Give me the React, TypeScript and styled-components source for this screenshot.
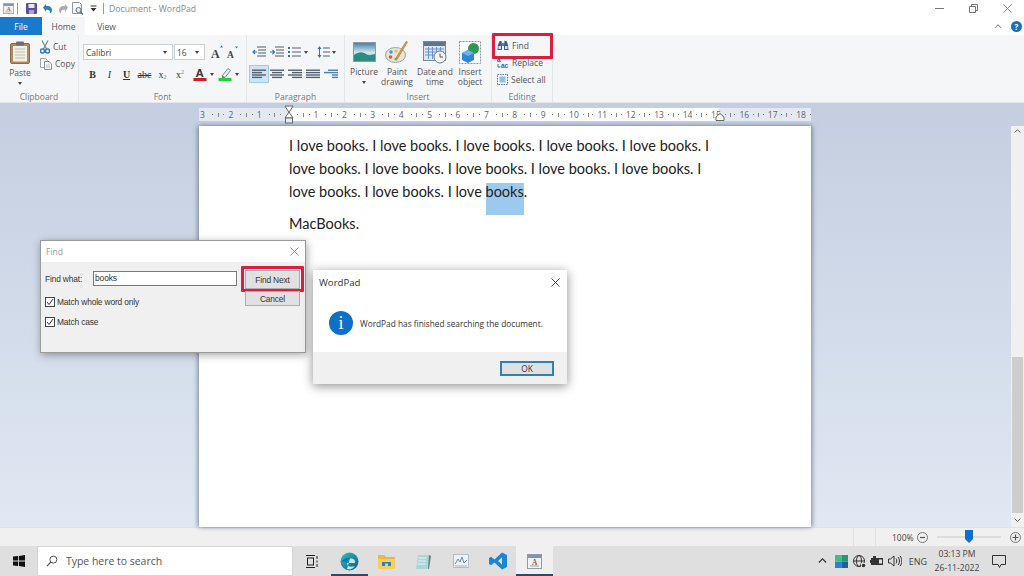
import React from 'react';
import styled, { createGlobalStyle } from 'styled-components';

const GlobalStyle = createGlobalStyle`
  html, body { margin: 0; padding: 0; overflow: hidden; background: #fff; }
  * { box-sizing: border-box; }
`;

const UI_FONT = `"Open Sans", "Noto Sans", sans-serif`;

const Screen = styled.div`
  position: relative;
  width: 1024px;
  height: 576px;
  display: flex;
  flex-direction: column;
  overflow: hidden;
  font-family: ${UI_FONT};
  font-size: 8.5px;
  color: #444;
`;

/* title bar */
const TitleBar = styled.div`
  height: 17px;
  display: flex;
  align-items: center;
  padding-left: 3px;
  background: #fff;
`;
const QuickSlot = styled.div<{ $w: number }>`
  width: ${p => p.$w}px;
  display: flex;
  justify-content: center;
  align-items: center;
  flex: none;
`;
const QuickSep = styled.div<{ $l: number; $r: number }>`
  width: 1px;
  height: 11px;
  background: #9a9a9a;
  margin: 0 ${p => p.$r}px 0 ${p => p.$l}px;
  flex: none;
`;
const DocTitle = styled.div`
  font-size: 8.7px;
  color: #8a8a8a;
`;
const WindowButtons = styled.div`
  margin-left: auto;
  display: flex;
  align-items: center;
`;
const WindowButton = styled.div`
  width: 34px;
  display: flex;
  justify-content: center;
  align-items: center;
`;

/* tabs */
const TabRow = styled.div`
  height: 18px;
  display: flex;
  align-items: stretch;
  background: #fff;
`;
const FileTab = styled.div`
  width: 42px;
  background: #1979ca;
  color: #fff;
  display: flex;
  align-items: center;
  justify-content: center;
  font-size: 8.5px;
`;
const Tab = styled.div<{ $active?: boolean }>`
  width: 43px;
  display: flex;
  align-items: center;
  justify-content: center;
  font-size: 8.5px;
  color: #555;
  background: ${p => (p.$active ? '#f5f6f7' : '#fff')};
`;
const TabEnd = styled.div`
  margin-left: auto;
  display: flex;
  align-items: center;
  gap: 9px;
  padding-right: 2px;
`;
const HelpDot = styled.div`
  width: 11px;
  height: 11px;
  border-radius: 50%;
  background: #1b6fc2;
  color: #fff;
  font-size: 8px;
  font-weight: 700;
  display: flex;
  align-items: center;
  justify-content: center;
`;

/* ribbon */
const Ribbon = styled.div`
  height: 68px;
  display: flex;
  background: #f5f6f7;
  border-bottom: 1px solid #e4e6ea;
`;
const Group = styled.div<{ $w: number }>`
  position: relative;
  width: ${p => p.$w}px;
  flex: none;
  display: flex;
  flex-direction: column;
  border-right: 1px solid #e3e5e8;
`;
const GroupBody = styled.div`
  flex: 1;
  min-height: 0;
`;
const GroupLabel = styled.div`
  height: 12px;
  line-height: 14px;
  text-align: center;
  font-size: 8.5px;
  color: #777;
`;
const ClipBody = styled(GroupBody)`
  display: flex;
`;
const PasteColumn = styled.div`
  width: 40px;
  padding-top: 6px;
  display: flex;
  flex-direction: column;
  align-items: center;
  color: #555;
`;
const PasteLabel = styled.div`
  margin-top: 4px;
  line-height: 10px;
`;
const Caret = styled.div`
  width: 0;
  height: 0;
  border-left: 2.5px solid transparent;
  border-right: 2.5px solid transparent;
  border-top: 3px solid #444;
  flex: none;
`;
const PasteCaret = styled(Caret)`
  margin-top: 4px;
`;
const SmallColumn = styled.div`
  padding-top: 3px;
  display: flex;
  flex-direction: column;
`;
const SmallRow = styled.div`
  height: 17px;
  display: flex;
  align-items: center;
  gap: 3px;
  white-space: nowrap;
  color: #555;
`;
const RowStack = styled(GroupBody)`
  padding-top: 9px;
  display: flex;
  flex-direction: column;
  gap: 6px;
`;
const ToolRow = styled.div`
  height: 16px;
  display: flex;
  align-items: center;
`;
const Combo = styled.div<{ $w: number }>`
  width: ${p => p.$w}px;
  height: 16px;
  margin-right: 1px;
  flex: none;
  background: #fff;
  border: 1px solid #c9ced6;
  display: flex;
  align-items: center;
  justify-content: space-between;
  padding: 0 5px 0 2px;
  font-size: 8.5px;
  color: #444;
`;
const Slot = styled.div<{ $w: number; $active?: boolean }>`
  width: ${p => p.$w}px;
  height: 16px;
  flex: none;
  display: flex;
  align-items: center;
  justify-content: center;
  background: ${p => (p.$active ? '#cfe2f6' : 'transparent')};
  outline: ${p => (p.$active ? '1px solid #a6c8ea' : 'none')};
  font-family: "Liberation Serif", serif;
  font-size: 10px;
  color: #333;
`;
const Script = styled.span<{ $up?: boolean }>`
  font-size: 6px;
  line-height: 6px;
  margin-top: ${p => (p.$up ? '-5px' : '5px')};
  color: #777;
`;
const Pad = styled.div<{ $w: number }>`
  width: ${p => p.$w}px;
  flex: none;
`;
const InsertBody = styled(GroupBody)`
  display: flex;
  padding: 6px 0 0 3px;
`;
const InsertItem = styled.div<{ $w: number }>`
  width: ${p => p.$w}px;
  display: flex;
  flex-direction: column;
  align-items: center;
  flex: none;
  text-align: center;
  line-height: 10px;
  color: #555;
  white-space: nowrap;
`;
const InsertIcon = styled.div`
  height: 22px;
  margin-bottom: 4px;
  display: flex;
  align-items: center;
`;
const InsertCaret = styled(Caret)`
  margin-top: 4px;
`;
const EditBody = styled(GroupBody)`
  padding: 2px 0 0 5px;
  display: flex;
  flex-direction: column;
`;
const RedBoxFind = styled.div`
  position: absolute;
  left: 0;
  top: -2px;
  width: 61px;
  height: 26px;
  border: 3px solid #dc1f3e;
  border-radius: 1px;
`;

/* workspace */
const Workspace = styled.div`
  position: relative;
  flex: 1;
  min-height: 0;
  background: linear-gradient(#c4cee0, #e0e8f3);
  display: flex;
  flex-direction: column;
  align-items: flex-start;
  padding: 5px 0 0 199px;
`;
const Ruler = styled.div`
  position: relative;
  width: 612px;
  height: 13px;
  display: flex;
  padding-left: 1px;
  overflow: hidden;
  background: linear-gradient(to right, #e4e9f1 90px, #fff 90px, #fff 520px, #e4e9f1 520px);
  font-size: 8.5px;
  color: #5d6270;
  flex: none;
`;
const RulerCell = styled.div`
  width: 28.4px;
  flex: none;
  display: flex;
  align-items: center;
  justify-content: space-between;
  padding-right: 4px;
`;
const RulerNumber = styled.span`
  min-width: 7px;
  line-height: 13px;
`;
const RulerDot = styled.span`
  width: 1px;
  height: 1px;
  background: #777;
`;
const RulerTick = styled.span`
  width: 1px;
  height: 4px;
  background: #888;
`;
const IndentMark = styled.div`
  position: absolute;
  left: 284px;
  top: 105px;
  line-height: 0;
`;
const RightMark = styled.div`
  position: absolute;
  left: 715px;
  top: 113px;
  line-height: 0;
`;
const Page = styled.div`
  margin-top: 5px;
  width: 612px;
  flex: 1;
  background: #fff;
  padding: 8px 93px 0 90px;
  box-shadow: -2px 0 4px rgba(70, 85, 115, 0.45), 2px 0 4px rgba(70, 85, 115, 0.45);
  font-family: Lato, "Liberation Sans", sans-serif;
  font-size: 14.5px;
  line-height: 23px;
  color: #222;
`;
const Paragraph = styled.div`
  margin-bottom: 9px;
`;
const Selected = styled.span`
  position: relative;
  &::before {
    content: '';
    position: absolute;
    left: 0;
    right: 0;
    top: 0;
    height: 32px;
    background: #9cc9ee;
    z-index: 0;
  }
  & > span {
    position: relative;
  }
`;
const ScrollBar = styled.div`
  position: absolute;
  right: 0;
  top: 23px;
  bottom: 0;
  width: 13px;
  background: #f0f0f0;
  display: flex;
  flex-direction: column;
  align-items: center;
  justify-content: space-between;
  padding-top: 3px;
`;
const ScrollThumb = styled.div`
  width: 11px;
  height: 156px;
  margin-top: auto;
  background: #cdcdcd;
`;
const ScrollDown = styled.div`
  height: 14px;
  display: flex;
  align-items: center;
`;

/* status bar */
const StatusBar = styled.div`
  height: 19px;
  flex: none;
  background: #f0f0f0;
  border-top: 1px solid #e2e2e2;
  display: flex;
  align-items: center;
  justify-content: flex-end;
  font-size: 8.5px;
  color: #444;
`;
const StatusSep = styled.div<{ $gap: number }>`
  width: 1px;
  height: 18px;
  background: #e2e2e2;
  margin-right: ${p => p.$gap}px;
`;
const ZoomText = styled.span`
  width: 25px;
`;
const ZoomButton = styled.div`
  width: 11px;
  height: 11px;
  border-radius: 50%;
  border: 1px solid #777;
  display: flex;
  align-items: center;
  justify-content: center;
  flex: none;
  line-height: 0;
`;
const ZoomTrack = styled.div`
  position: relative;
  width: 64px;
  height: 2px;
  margin: 0 9px;
  background: #dcdcdc;
`;
const ZoomThumb = styled.div`
  position: absolute;
  left: 28px;
  top: -6px;
  width: 8px;
  height: 13px;
  background: #0f6fd0;
  clip-path: polygon(0 0, 100% 0, 100% 70%, 50% 100%, 0 70%);
`;

/* task bar */
const TaskBar = styled.div`
  height: 30px;
  flex: none;
  background: #dfdfdf;
  display: flex;
  align-items: stretch;
`;
const StartButton = styled.div`
  width: 37px;
  display: flex;
  align-items: center;
  justify-content: center;
`;
const SearchBox = styled.div`
  width: 256px;
  background: #fff;
  border: 1px solid #d4d4d4;
  display: flex;
  align-items: center;
  padding-left: 8px;
  gap: 8px;
  font-size: 10.45px;
  color: #555;
`;
const TaskViewSlot = styled.div`
  width: 38px;
  display: flex;
  align-items: center;
  justify-content: center;
`;
const TaskSlot = styled.div<{ $open?: boolean; $active?: boolean }>`
  width: 37px;
  display: flex;
  align-items: center;
  justify-content: center;
  background: ${p => (p.$active ? '#f0f0f0' : 'transparent')};
  border-bottom: 2px solid ${p => (p.$open ? '#2c4a6e' : 'transparent')};
  border-top: 2px solid transparent;
`;
const Tray = styled.div`
  margin-left: auto;
  display: flex;
  align-items: center;
  padding-right: 10px;
  color: #444;
`;
const TraySlot = styled.div<{ $w: number }>`
  width: ${p => p.$w}px;
  display: flex;
  align-items: center;
  justify-content: center;
  flex: none;
`;
const Lang = styled.div`
  width: 24px;
  font-size: 9px;
  text-align: center;
  margin-left: 3px;
`;
const Clock = styled.div`
  width: 54px;
  text-align: center;
  font-size: 8.6px;
  line-height: 14px;
`;

/* dialogs */
const FindDialog = styled.div`
  position: absolute;
  left: 40px;
  top: 240px;
  width: 266px;
  height: 113px;
  background: #f0f0f0;
  border: 1px solid #9a9a9a;
  box-shadow: 1px 2px 8px rgba(0, 0, 0, 0.35);
  display: flex;
  flex-direction: column;
  font-family: "Liberation Sans", sans-serif;
  font-size: 8.4px;
  letter-spacing: -0.15px;
  color: #333;
`;
const FindTitle = styled.div`
  height: 21px;
  flex: none;
  background: #fff;
  display: flex;
  align-items: center;
  justify-content: space-between;
  padding: 0 6px 0 5px;
  font-family: ${UI_FONT};
  font-size: 8.5px;
  letter-spacing: 0;
  color: #9a9a9a;
`;
const FindContent = styled.div`
  display: grid;
  grid-template-columns: 1fr 55px;
  column-gap: 8px;
  padding: 8px 5px 0 4px;
`;
const FindLeft = styled.div`
  display: flex;
  flex-direction: column;
  gap: 5px;
  padding-top: 1px;
`;
const FindLine = styled.div`
  display: flex;
  align-items: center;
  height: 15px;
  margin-bottom: 3px;
`;
const FindLabel = styled.span`
  width: 48px;
`;
const FindInput = styled.div`
  width: 144px;
  height: 15px;
  background: #fff;
  border: 1px solid #7a7a7a;
  padding-left: 1px;
  line-height: 13px;
  font-size: 8.5px;
`;
const CheckLine = styled.div`
  display: flex;
  align-items: center;
  gap: 2px;
  height: 15px;
`;
const CheckBox = styled.div`
  width: 10px;
  height: 10px;
  background: #fff;
  border: 1px solid #444;
  display: flex;
  align-items: center;
  justify-content: center;
`;
const FindButtons = styled.div`
  display: flex;
  flex-direction: column;
  gap: 2px;
`;
const DialogButton = styled.div<{ $primary?: boolean }>`
  position: relative;
  height: ${p => (p.$primary ? '19px' : '15px')};
  background: #e1e1e1;
  border: 1px solid #adadad;
  display: flex;
  align-items: center;
  justify-content: center;
`;
const RedBoxNext = styled.div`
  position: absolute;
  left: -5px;
  top: -5px;
  width: 63px;
  height: 26px;
  border: 3px solid #dc1f3e;
  border-radius: 1px;
`;
const MessageDialog = styled.div`
  position: absolute;
  left: 313px;
  top: 270px;
  width: 254px;
  height: 114px;
  background: #fff;
  box-shadow: 0 2px 10px rgba(0, 0, 0, 0.45);
  display: flex;
  flex-direction: column;
  font-size: 8.3px;
  color: #333;
`;
const MessageTop = styled.div`
  height: 24px;
  flex: none;
  display: flex;
  align-items: center;
  justify-content: space-between;
  padding: 0 7px 0 6px;
  font-size: 9.6px;
  color: #333;
`;
const MessageBody = styled.div`
  flex: 1;
  display: flex;
  align-items: center;
  gap: 7px;
  padding: 0 0 0 16px;
`;
const InfoDot = styled.div`
  width: 24px;
  height: 24px;
  border-radius: 50%;
  background: #0c6fc8;
  color: #fff;
  display: flex;
  align-items: center;
  justify-content: center;
  font-family: "Liberation Serif", serif;
  font-size: 18px;
  flex: none;
`;
const MessageFoot = styled.div`
  height: 32px;
  flex: none;
  background: #f0f0f0;
  display: flex;
  align-items: center;
  justify-content: flex-end;
  padding-right: 13px;
`;
const OkButton = styled.div`
  width: 54px;
  height: 15px;
  background: #e1e1e1;
  border: 2px solid #2f7ebd;
  display: flex;
  align-items: center;
  justify-content: center;
`;

/* drawings */
const Close = ({ c = '#666', s = 9 }: { c?: string; s?: number }) => (
  <svg width={s} height={s} viewBox="0 0 10 10">
    <path d="M0.5 0.5L9.5 9.5M9.5 0.5L0.5 9.5" stroke={c} strokeWidth="1" fill="none" />
  </svg>
);

const Lines = ({ rows, c = '#55606e' }: { rows: number[][]; c?: string }) => (
  <svg width="14" height="11" viewBox="0 0 14 11">
    {rows.map((r, i) => (
      <rect key={i} x={r[0]} y={i * 2.4 + 0.5} width={r[1]} height="1.4" fill={c} />
    ))}
  </svg>
);

const Indent = ({ flip }: { flip?: boolean }) => (
  <svg width="14" height="12" viewBox="0 0 14 12">
    <path d="M5 1h9M6 4h8M6 7h8M5 10h9" stroke="#4f5b68" strokeWidth="1.2" />
    <path d={flip ? 'M0 6h4M2.5 4l2 2-2 2' : 'M5 6H1M3 4L1 6l2 2'} stroke="#3573b5" strokeWidth="1.1" fill="none" />
  </svg>
);

const BulletList = () => (
  <svg width="14" height="12" viewBox="0 0 14 12">
    <path d="M5 2h9M5 6h9M5 10h9" stroke="#56616e" strokeWidth="1.2" />
    <path d="M1 1h2v2H1zM1 5h2v2H1zM1 9h2v2H1z" fill="#2d75ba" />
  </svg>
);

const LineSpacing = () => (
  <svg width="13" height="14" viewBox="0 0 13 14">
    <path d="M2.5 1L0.5 4h4zM2.5 13L0.5 10h4z" fill="#2d75ba" />
    <rect x="2" y="4" width="1" height="6" fill="#2d75ba" />
    <path d="M6 3h7M6 7h7M6 11h7" stroke="#56616e" strokeWidth="1.2" />
  </svg>
);

const Clipboard = () => (
  <svg width="20" height="23" viewBox="0 0 20 23">
    <rect x="0.5" y="2.5" width="19" height="20" rx="1.5" fill="#b08a63" stroke="#8a6a48" />
    <rect x="3" y="5" width="14" height="15.5" fill="#f4f0df" />
    <path d="M5 8h10M5 11h10M5 14h10M5 17h10" stroke="#b8bcc0" />
    <rect x="6" y="0.5" width="8" height="4" rx="1" fill="#6d6d6d" />
  </svg>
);

const Scissors = () => (
  <svg width="10" height="14" viewBox="0 0 10 14">
    <path d="M2 0.5L6.5 9M8 0.5L3.5 9" stroke="#7f8a96" strokeWidth="1.3" fill="none" />
    <circle cx="2.5" cy="11" r="2" fill="none" stroke="#2c7cc4" strokeWidth="1.5" />
    <circle cx="7.5" cy="11" r="2" fill="none" stroke="#2c7cc4" strokeWidth="1.5" />
  </svg>
);

const CopyIcon = () => (
  <svg width="12" height="12" viewBox="0 0 12 12">
    <path d="M0.5 0.5h5l2 2v7h-7z" fill="#fff" stroke="#9aa3ad" />
    <path d="M4.5 3.5h4.5l2.5 2.5v5.5h-7z" fill="#fdfdfd" stroke="#8a94a0" />
    <path d="M6 7h4M6 9h4" stroke="#b5bcc4" />
  </svg>
);

const AGrow = ({ small }: { small?: boolean }) => (
  <svg width="15" height="14" viewBox="0 0 15 14">
    <text x="1" y="12.5" fontFamily="Liberation Serif, serif" fontWeight="700" fontSize={small ? 9.5 : 12} fill="#444">A</text>
    <path d={small ? 'M9 1.5h3L10.5 3.5z' : 'M11.5 0.5L13 2.5h-3z'} fill="#2d75ba" />
  </svg>
);

const FontColor = () => (
  <svg width="14" height="14" viewBox="0 0 14 14">
    <text x="2.5" y="10" fontFamily="Liberation Sans, sans-serif" fontWeight="700" fontSize="11.5" fill="#333">A</text>
    <rect x="0.5" y="11" width="13" height="3" fill="#d11b2b" />
  </svg>
);

const HighlightPen = () => (
  <svg width="14" height="14" viewBox="0 0 14 14">
    <path d="M4 9L10 1.5l2.5 2L7 10.5z" fill="#e7edf4" stroke="#7d8a98" />
    <path d="M4 9l3 1.5-3 .5z" fill="#666" />
    <rect x="0.5" y="11" width="13" height="3" fill="#22d13a" />
  </svg>
);

const PictureIcon = () => (
  <svg width="23" height="20" viewBox="0 0 23 20">
    <defs>
      <linearGradient id="sky" x1="0" y1="0" x2="0" y2="1">
        <stop offset="0" stopColor="#3d7fae" />
        <stop offset="0.55" stopColor="#d7e9ee" />
        <stop offset="1" stopColor="#2f7f83" />
      </linearGradient>
    </defs>
    <rect x="0.5" y="0.5" width="22" height="19" fill="url(#sky)" stroke="#8b98a5" />
    <path d="M1 13c5-4 9-3 12-1s6 1 9 0v7H1z" fill="#2f8a80" />
  </svg>
);

const PaletteIcon = () => (
  <svg width="25" height="23" viewBox="0 0 25 23">
    <ellipse cx="10.5" cy="14" rx="10" ry="7.5" fill="#e9e4d6" stroke="#97a4b4" />
    <circle cx="6" cy="11" r="1.8" fill="#3f9bd8" />
    <circle cx="5.5" cy="16" r="1.8" fill="#e2574c" />
    <circle cx="11" cy="18" r="1.6" fill="#6fbf4c" />
    <circle cx="11" cy="10" r="1.6" fill="#f0c23c" />
    <path d="M22.5 1L13 17l-2 2 .5-3L21 .5z" fill="#d8a04a" stroke="#a8752f" strokeWidth="0.6" />
  </svg>
);

const CalendarIcon = () => (
  <svg width="24" height="23" viewBox="0 0 24 23">
    <rect x="0.5" y="0.5" width="22" height="19" fill="#dbe6f2" stroke="#7d8794" />
    <rect x="1" y="1" width="21" height="4" fill="#5c7693" />
    <path d="M2 8h19M2 11h19M2 14h19M5.5 6v12M9.5 6v12M13.5 6v12M17.5 6v12" stroke="#5d8fc9" strokeWidth="0.9" />
    <circle cx="17" cy="16" r="6" fill="#f4f4f0" stroke="#767d86" />
    <path d="M17 12.5V16h3" stroke="#555" fill="none" />
  </svg>
);

const ObjectIcon = () => (
  <svg width="22" height="23" viewBox="0 0 22 23">
    <rect x="0.5" y="0.5" width="21" height="22" fill="#fff" stroke="#8d959d" strokeDasharray="2 1" />
    <circle cx="14.5" cy="7.5" r="5.5" fill="#2e9a4e" />
    <path d="M3 12l6-3 6 3v7l-6 3-6-3z" fill="#2f85d8" />
    <path d="M3 12l6 3 6-3-6-3z" fill="#6fb1ea" />
  </svg>
);

const Binoculars = () => (
  <svg width="12" height="11" viewBox="0 0 12 11">
    <path d="M1 5l1.5-4h2L5 5v5H0.5zM11 5L9.5 1h-2L7 5v5h4.5z" fill="#3b5f8a" />
    <rect x="5" y="3" width="2" height="3" fill="#6a7f98" />
    <rect x="1.5" y="6" width="2.5" height="3" fill="#cfe0f2" />
    <rect x="8" y="6" width="2.5" height="3" fill="#cfe0f2" />
  </svg>
);

const ReplaceIcon = () => (
  <svg width="12" height="13" viewBox="0 0 12 13">
    <text x="0" y="5.5" fontFamily="Liberation Sans, sans-serif" fontSize="6.5" fontWeight="700" fill="#444">a</text>
    <text x="4" y="12" fontFamily="Liberation Sans, sans-serif" fontSize="6.5" fontWeight="700" fill="#2d6aa5">ac</text>
    <path d="M1 8v3h2.5" stroke="#2d75ba" fill="none" />
  </svg>
);

const SelectAllIcon = () => (
  <svg width="11" height="11" viewBox="0 0 11 11">
    <rect x="0.5" y="0.5" width="10" height="10" fill="#fff" stroke="#3d7bb8" strokeDasharray="1.5 1" />
    <rect x="2.5" y="2.5" width="6" height="6" fill="#8fc0ea" />
  </svg>
);

const WindowsLogo = () => (
  <svg width="12" height="12" viewBox="0 0 12 12">
    <path d="M0 1.6L5.2 1v4.6H0zM6 .9L12 0v5.6H6zM0 6.4h5.2V11L0 10.4zM6 6.4h6V12l-6-.9z" fill="#111" />
  </svg>
);

const SearchGlass = () => (
  <svg width="12" height="12" viewBox="0 0 13 13">
    <circle cx="8" cy="5" r="3.8" fill="none" stroke="#444" strokeWidth="1" />
    <path d="M5.2 7.8L1 12" stroke="#444" strokeWidth="1.1" />
  </svg>
);

const TaskView = () => (
  <svg width="12" height="13" viewBox="0 0 12 13">
    <path d="M0 .5h9M0 12.5h9" stroke="#222" />
    <rect x="1.5" y="3" width="6" height="7" fill="none" stroke="#222" />
    <path d="M11 1v3M11 5.5v2M11 9v3" stroke="#222" />
  </svg>
);

const EdgeIcon = () => (
  <svg width="19" height="19" viewBox="0 0 19 19">
    <defs>
      <linearGradient id="edge" x1="0" y1="0" x2="1" y2="1">
        <stop offset="0" stopColor="#2fc5a4" />
        <stop offset="1" stopColor="#0b56a8" />
      </linearGradient>
    </defs>
    <circle cx="9.5" cy="9.5" r="9" fill="url(#edge)" />
    <path d="M10 6.5c4 0 5.5 2 5 4.5h-8c-.2 3 3.5 5 8 3-2 3-5.5 4-8 3" fill="#d8f3e8" opacity="0.9" />
    <path d="M7 11c0-3 1.5-4.5 3-4.5C6 5 2 8 1.5 11c1-2 3-2.5 5.5 0z" fill="#0e6fbd" />
  </svg>
);

const FolderIcon = () => (
  <svg width="17" height="15" viewBox="0 0 17 15">
    <path d="M0 1h6l2 2h9v3H0z" fill="#e9b93f" />
    <rect y="5" width="17" height="10" fill="#f6cf62" />
    <rect x="4" y="8" width="9" height="4" fill="#2c7fb8" />
    <rect x="7" y="9.5" width="3" height="5.5" fill="#f6cf62" />
  </svg>
);

const NotesIcon = () => (
  <svg width="17" height="17" viewBox="0 0 17 17">
    <path d="M3 2h11v14H1z" fill="#a9d6d8" />
    <path d="M14 2l2 1-2 13-1-.5z" fill="#667d83" />
    <path d="M3.5 5h8M3 8h8M2.5 11h8" stroke="#e7f5f5" />
  </svg>
);

const MonitorIcon = () => (
  <svg width="16" height="14" viewBox="0 0 16 14">
    <rect x="0.5" y="0.5" width="15" height="13" fill="#eef1f5" stroke="#b5bcc5" />
    <path d="M2 10l3-5 2 3 2-5 2 6 3-3" stroke="#6d88ad" fill="none" />
    <path d="M2 12h12" stroke="#a8b2be" />
  </svg>
);

const VsCodeIcon = () => (
  <svg width="18" height="18" viewBox="0 0 18 18">
    <path d="M13 0.5L18 3v12l-5 2.5L5.5 10.5 2 13.2 0 12V6l2-1.2 3.5 2.7zM13 5.2L9 9l4 3.8z" fill="#1a85d6" />
  </svg>
);

const WordPadIcon = ({ s = 15 }: { s?: number }) => (
  <svg width={s} height={s} viewBox="0 0 15 15">
    <rect x="0.5" y="0.5" width="14" height="14" fill="#eef2f7" stroke="#8d9bab" />
    <rect x="1" y="1" width="13" height="3" fill="#7c95b3" />
    <text x="5" y="10.5" fontFamily="Liberation Serif, serif" fontSize="7.5" fontWeight="700" fill="#c8502a">A</text>
    <path d="M3 12h9" stroke="#8fa6c0" />
  </svg>
);

const SaveIcon = () => (
  <svg width="11" height="11" viewBox="0 0 11 11">
    <rect width="11" height="11" rx="1" fill="#5a4f9c" />
    <rect x="2.5" y="1" width="6" height="4" fill="#e8e8f2" />
    <rect x="3" y="7" width="5" height="4" fill="#aaa6cc" />
  </svg>
);

const TurnArrow = ({ c, flip }: { c: string; flip?: boolean }) => (
  <svg width="10" height="11" viewBox="0 0 10 11">
    <g transform={flip ? 'matrix(-1 0 0 1 10 0)' : undefined}>
      <path d="M3 3.2c3.5-1 6 1 6 4 0 1.5-1 3-2.5 3.5 1-1.5.8-4.5-3.5-4v2.3L0 4.5 3 1z" fill={c} />
    </g>
  </svg>
);

const PreviewIcon = () => (
  <svg width="12" height="13" viewBox="0 0 12 13">
    <path d="M0.5 0.5h7l2 2v9h-9z" fill="#fff" stroke="#8c97a3" />
    <circle cx="6.5" cy="8" r="2.5" fill="#e8eef5" stroke="#66707c" />
    <path d="M8.3 9.8L11 12.5" stroke="#66707c" strokeWidth="1.3" />
  </svg>
);

const QuickDrop = () => (
  <svg width="7" height="7" viewBox="0 0 7 7">
    <path d="M0.5 1h6" stroke="#333" />
    <path d="M0.5 3h6L3.5 6.5z" fill="#333" />
  </svg>
);

const Chevron = ({ up, c = '#555', s = 9 }: { up?: boolean; c?: string; s?: number }) => (
  <svg width={s} height={s * 0.6} viewBox="0 0 10 6">
    <path d={up ? 'M1 5l4-4 4 4' : 'M1 1l4 4 4-4'} stroke={c} strokeWidth="1.3" fill="none" />
  </svg>
);

const ColorTiles = () => (
  <svg width="13" height="13" viewBox="0 0 13 13">
    <rect width="6.5" height="6.5" x="0" y="6.5" fill="#2b7fd6" />
    <rect width="6.5" height="6.5" x="6.5" y="6.5" fill="#1d5f9f" />
    <rect width="6.5" height="6.5" x="0" y="0" fill="#3fbf84" />
    <rect width="6.5" height="6.5" x="6.5" y="0" fill="#1f9a70" />
  </svg>
);

const Globe = () => (
  <svg width="13" height="13" viewBox="0 0 13 13">
    <circle cx="6" cy="6" r="5.5" fill="none" stroke="#333" />
    <ellipse cx="6" cy="6" rx="2.5" ry="5.5" fill="none" stroke="#333" />
    <path d="M0.5 6h11" stroke="#333" />
    <rect x="8" y="8" width="5" height="5" fill="#dfdfdf" />
    <circle cx="10.5" cy="10.5" r="1.8" fill="#333" />
  </svg>
);

const Battery = () => (
  <svg width="14" height="10" viewBox="0 0 14 10">
    <rect x="1" y="2" width="12" height="7" fill="#333" />
    <rect x="0" y="4" width="1" height="3" fill="#333" />
    <path d="M3 0h3v2H3z" fill="#333" />
    <rect x="9" y="3.5" width="3" height="4" fill="#dfdfdf" />
  </svg>
);

const Speaker = () => (
  <svg width="14" height="12" viewBox="0 0 14 12">
    <path d="M0.5 4h2L6 1v10L2.5 8h-2z" fill="none" stroke="#333" />
    <path d="M8 3.5c1 1.5 1 3.5 0 5M10 2c2 2.5 2 5.5 0 8M12 .8c2.4 3 2.4 7.4 0 10.4" fill="none" stroke="#333" />
  </svg>
);

const NotifyIcon = () => (
  <svg width="14" height="13" viewBox="0 0 14 13">
    <path d="M0.5 0.5h13v9H9l-1.5 3-1.5-3H0.5z" fill="none" stroke="#333" />
  </svg>
);

const Hourglass = () => (
  <svg width="10" height="20" viewBox="0 0 10 20">
    <path d="M1 1h8L5 7.5zM1 13l4-6 4 6z" fill="#fff" stroke="#666" />
    <rect x="1.5" y="13" width="7" height="5" fill="#e8ebf0" stroke="#666" />
  </svg>
);

const RightIndent = () => (
  <svg width="10" height="8" viewBox="0 0 10 8">
    <path d="M1 7.5V4l4-3.5L9 4v3.5z" fill="#fff" stroke="#666" />
  </svg>
);

const Check = () => (
  <svg width="8" height="8" viewBox="0 0 8 8">
    <path d="M1 4l2 2.5L7 1" stroke="#333" fill="none" />
  </svg>
);

const Cross = ({ minus }: { minus?: boolean }) => (
  <svg width="7" height="7" viewBox="0 0 7 7">
    <path d={minus ? 'M1 3.5h5' : 'M0.5 3.5h6M3.5 0.5v6'} stroke="#555" strokeWidth="1.2" />
  </svg>
);

const RULER_VALUES = [3, 2, 1, 0, 1, 2, 3, 4, 5, 6, 7, 8, 9, 10, 11, 12, 13, 14, 15, 16, 17, 18];

const SENTENCE = 'I love books. ';

const App = () => (
  <Screen>
    <GlobalStyle />
    <TitleBar>
      <QuickSlot $w={11}><WordPadIcon s={11} /></QuickSlot>
      <QuickSep $l={3} $r={8} />
      <QuickSlot $w={11}><SaveIcon /></QuickSlot>
      <QuickSlot $w={21}><TurnArrow c="#2a7cc4" /></QuickSlot>
      <QuickSlot $w={10}><TurnArrow c="#a9adb3" flip /></QuickSlot>
      <QuickSlot $w={20}><PreviewIcon /></QuickSlot>
      <QuickSlot $w={10}><QuickDrop /></QuickSlot>
      <QuickSep $l={5} $r={5} />
      <DocTitle>Document - WordPad</DocTitle>
      <WindowButtons>
        <WindowButton>
          <svg width="9" height="1"><rect width="9" height="1" fill="#777" /></svg>
        </WindowButton>
        <WindowButton>
          <svg width="9" height="9" viewBox="0 0 9 9">
            <path d="M2.5 2V.5h6v6H7M.5 2.5h6v6h-6z" fill="none" stroke="#777" />
          </svg>
        </WindowButton>
        <WindowButton><Close c="#777" /></WindowButton>
      </WindowButtons>
    </TitleBar>

    <TabRow>
      <FileTab>File</FileTab>
      <Tab $active>Home</Tab>
      <Tab>View</Tab>
      <TabEnd>
        <Chevron up c="#999" s={8} />
        <HelpDot>?</HelpDot>
      </TabEnd>
    </TabRow>

    <Ribbon>
      <Group $w={79}>
        <ClipBody>
          <PasteColumn>
            <Clipboard />
            <PasteLabel>Paste</PasteLabel>
            <PasteCaret />
          </PasteColumn>
          <SmallColumn>
            <SmallRow><Scissors /> Cut</SmallRow>
            <SmallRow><CopyIcon /> Copy</SmallRow>
          </SmallColumn>
        </ClipBody>
        <GroupLabel>Clipboard</GroupLabel>
      </Group>

      <Group $w={168}>
        <RowStack>
          <ToolRow>
            <Pad $w={4} />
            <Combo $w={90}>Calibri <Caret /></Combo>
            <Combo $w={31}>16 <Caret /></Combo>
            <Pad $w={3} />
            <Slot $w={16}><AGrow /></Slot>
            <Slot $w={16}><AGrow small /></Slot>
          </ToolRow>
          <ToolRow>
            <Pad $w={5} />
            <Slot $w={17}><b>B</b></Slot>
            <Slot $w={17}><i>I</i></Slot>
            <Slot $w={17}><u><b>U</b></u></Slot>
            <Slot $w={19}><s>abc</s></Slot>
            <Slot $w={17}>x<Script>2</Script></Slot>
            <Slot $w={18}>x<Script $up>2</Script></Slot>
            <Pad $w={2} />
            <Slot $w={18}><FontColor /></Slot>
            <Slot $w={6}><Caret /></Slot>
            <Pad $w={1} />
            <Slot $w={18}><HighlightPen /></Slot>
            <Slot $w={6}><Caret /></Slot>
          </ToolRow>
        </RowStack>
        <GroupLabel>Font</GroupLabel>
      </Group>

      <Group $w={98}>
        <RowStack>
          <ToolRow>
            <Pad $w={3} />
            <Slot $w={18}><Indent /></Slot>
            <Slot $w={18}><Indent flip /></Slot>
            <Slot $w={16}><BulletList /></Slot>
            <Slot $w={8}><Caret /></Slot>
            <Pad $w={5} />
            <Slot $w={16}><LineSpacing /></Slot>
            <Slot $w={6}><Caret /></Slot>
          </ToolRow>
          <ToolRow>
            <Pad $w={3} />
            <Slot $w={18} $active><Lines rows={[[0, 14], [0, 10], [0, 14], [0, 10]]} /></Slot>
            <Slot $w={18}><Lines rows={[[0, 14], [2, 10], [0, 14], [2, 10]]} /></Slot>
            <Slot $w={18}><Lines rows={[[0, 14], [4, 10], [0, 14], [4, 10]]} /></Slot>
            <Slot $w={18}><Lines rows={[[0, 14], [0, 14], [0, 14], [0, 14]]} /></Slot>
            <Slot $w={18}><Lines rows={[[4, 10], [0, 14], [8, 6], [8, 6]]} c="#4b7fae" /></Slot>
          </ToolRow>
        </RowStack>
        <GroupLabel>Paragraph</GroupLabel>
      </Group>

      <Group $w={147}>
        <InsertBody>
          <InsertItem $w={32}>
            <InsertIcon><PictureIcon /></InsertIcon>
            Picture
            <InsertCaret />
          </InsertItem>
          <InsertItem $w={34}>
            <InsertIcon><PaletteIcon /></InsertIcon>
            Paint<br />drawing
          </InsertItem>
          <InsertItem $w={42}>
            <InsertIcon><CalendarIcon /></InsertIcon>
            Date and<br />time
          </InsertItem>
          <InsertItem $w={28}>
            <InsertIcon><ObjectIcon /></InsertIcon>
            Insert<br />object
          </InsertItem>
        </InsertBody>
        <GroupLabel>Insert</GroupLabel>
      </Group>

      <Group $w={61}>
        <RedBoxFind />
        <EditBody>
          <SmallRow><Binoculars /> Find</SmallRow>
          <SmallRow><ReplaceIcon /> Replace</SmallRow>
          <SmallRow><SelectAllIcon /> Select all</SmallRow>
        </EditBody>
        <GroupLabel>Editing</GroupLabel>
      </Group>
    </Ribbon>

    <Workspace>
      <Ruler>
        {RULER_VALUES.map((v, i) => (
          <RulerCell key={i}>
            <RulerNumber>{v === 0 ? '' : v}</RulerNumber>
            <RulerDot />
            <RulerTick />
            <RulerDot />
          </RulerCell>
        ))}
      </Ruler>
      <Page>
        <Paragraph>
          {SENTENCE.repeat(12)}I love <Selected><span>books</span></Selected>.
        </Paragraph>
        <Paragraph>MacBooks.</Paragraph>
      </Page>
      <ScrollBar>
        <Chevron up c="#555" s={7} />
        <ScrollThumb />
        <ScrollDown><Chevron c="#555" s={7} /></ScrollDown>
      </ScrollBar>
    </Workspace>

    <StatusBar>
      <StatusSep $gap={21} />
      <StatusSep $gap={16} />
      <ZoomText>100%</ZoomText>
      <ZoomButton><Cross minus /></ZoomButton>
      <ZoomTrack><ZoomThumb /></ZoomTrack>
      <ZoomButton><Cross /></ZoomButton>
      <Pad $w={3} />
    </StatusBar>

    <TaskBar>
      <StartButton><WindowsLogo /></StartButton>
      <SearchBox><SearchGlass /> Type here to search</SearchBox>
      <TaskViewSlot><TaskView /></TaskViewSlot>
      <TaskSlot $open><EdgeIcon /></TaskSlot>
      <TaskSlot><FolderIcon /></TaskSlot>
      <TaskSlot><NotesIcon /></TaskSlot>
      <TaskSlot><MonitorIcon /></TaskSlot>
      <TaskSlot><VsCodeIcon /></TaskSlot>
      <TaskSlot $open $active><WordPadIcon /></TaskSlot>
      <Tray>
        <TraySlot $w={19}><Chevron up c="#333" s={9} /></TraySlot>
        <TraySlot $w={18}><ColorTiles /></TraySlot>
        <TraySlot $w={18}><Globe /></TraySlot>
        <TraySlot $w={18}><Battery /></TraySlot>
        <TraySlot $w={17}><Speaker /></TraySlot>
        <Lang>ENG</Lang>
        <Clock>03:13 PM<br />26-11-2022</Clock>
        <TraySlot $w={30}><NotifyIcon /></TraySlot>
      </Tray>
    </TaskBar>

    <FindDialog>
      <FindTitle>Find <Close c="#888" /></FindTitle>
      <FindContent>
        <FindLeft>
          <FindLine>
            <FindLabel>Find what:</FindLabel>
            <FindInput>books</FindInput>
          </FindLine>
          <CheckLine><CheckBox><Check /></CheckBox> Match whole word only</CheckLine>
          <CheckLine><CheckBox><Check /></CheckBox> Match case</CheckLine>
        </FindLeft>
        <FindButtons>
          <DialogButton $primary>Find Next<RedBoxNext /></DialogButton>
          <DialogButton>Cancel</DialogButton>
        </FindButtons>
      </FindContent>
    </FindDialog>

    <MessageDialog>
      <MessageTop>WordPad <Close c="#333" /></MessageTop>
      <MessageBody>
        <InfoDot>i</InfoDot>
        WordPad has finished searching the document.
      </MessageBody>
      <MessageFoot><OkButton>OK</OkButton></MessageFoot>
    </MessageDialog>

    <IndentMark><Hourglass /></IndentMark>
    <RightMark><RightIndent /></RightMark>
  </Screen>
);

export default App;
